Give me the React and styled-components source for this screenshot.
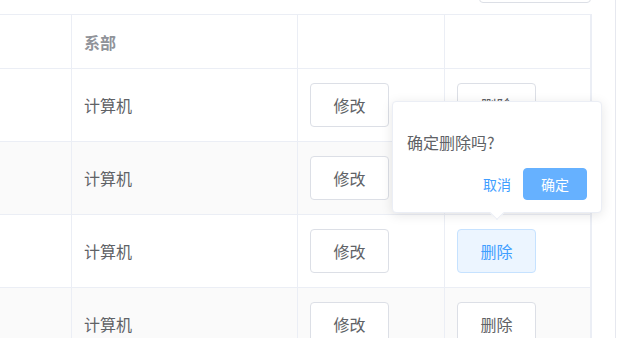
import React from "react";
import styled, { createGlobalStyle } from "styled-components";

const GlobalStyle = createGlobalStyle`
  html, body { margin: 0; padding: 0; background: #fff; }
  body { font-family: "Noto Sans CJK SC", "Noto Sans", sans-serif; }
  * { box-sizing: border-box; }
`;

const Page = styled.div`
  position: relative;
  width: 616px;
  height: 338px;
  overflow: hidden;
  border-right: 1px solid #e6e8ef;
  background: #fff;
`;

const Toolbar = styled.div`
  height: 3px;
  overflow: hidden;
  display: flex;
  justify-content: flex-end;
  align-items: flex-end;
  padding-right: 24px;
  margin-bottom: 11px;
`;

const ToolButton = styled.button`
  width: 112px;
  height: 36px;
  border: 1px solid #dcdfe6;
  border-radius: 4px;
  background: #fff;
`;

const Table = styled.div`
  width: 592px;
  border-top: 1px solid #ebeef5;
`;

const Row = styled.div`
  display: grid;
  grid-template-columns: 72px 226px 147px 147px;
  height: ${(p) => (p.$header ? "54px" : "73px")};
  background: ${(p) => (p.$striped ? "#fafafa" : "#fff")};
`;

const Cell = styled.div`
  display: flex;
  align-items: center;
  padding: 0 12px;
  border-right: 1px solid #ebeef5;
  border-bottom: 1px solid #ebeef5;
  font-size: 16px;
  color: ${(p) => (p.$header ? "#909399" : "#606266")};
  font-weight: ${(p) => (p.$header ? 700 : 400)};
  &:last-child { border-right-width: 2px; }
`;

const Button = styled.button`
  width: 79px;
  height: 44px;
  border-radius: 4px;
  font-family: inherit;
  font-size: 16px;
  padding: 0;
  cursor: pointer;
  border: 1px solid ${(p) => (p.$active ? "#c6e2ff" : "#dcdfe6")};
  background: ${(p) => (p.$active ? "#ecf5ff" : "#fff")};
  color: ${(p) => (p.$active ? "#409eff" : "#606266")};
`;

const Popover = styled.div`
  position: absolute;
  left: 392px;
  top: 101px;
  width: 210px;
  height: 112px;
  padding: 29px 14px 13px;
  background: #fff;
  border: 1px solid #ebeef5;
  border-radius: 4px;
  box-shadow: 0 2px 12px 0 rgba(0, 0, 0, 0.1);
  z-index: 10;
`;

const Arrow = styled.span`
  position: absolute;
  left: 99px;
  bottom: -6px;
  width: 10px;
  height: 10px;
  background: #fff;
  border-right: 1px solid #ebeef5;
  border-bottom: 1px solid #ebeef5;
  transform: rotate(45deg);
`;

const Message = styled.p`
  margin: 0;
  font-size: 16px;
  line-height: 22px;
  color: #606266;
`;

const Actions = styled.div`
  display: flex;
  justify-content: flex-end;
  align-items: center;
  gap: 12px;
  margin-top: 15px;
`;

const TextButton = styled.button`
  border: none;
  background: none;
  padding: 0;
  font-family: inherit;
  font-size: 14px;
  color: #409eff;
`;

const PrimaryButton = styled.button`
  width: 64px;
  height: 32px;
  border: 1px solid #66b1ff;
  border-radius: 4px;
  background: #66b1ff;
  color: #fff;
  font-family: inherit;
  font-size: 14px;
  padding: 0;
`;

const rows = [0, 1, 2, 3];

export default function App() {
  return (
    <Page>
      <GlobalStyle />
      <Toolbar>
        <ToolButton />
      </Toolbar>
      <Table>
        <Row $header>
          <Cell $header />
          <Cell $header>系部</Cell>
          <Cell $header />
          <Cell $header />
        </Row>
        {rows.map((i) => (
          <Row key={i} $striped={i % 2 === 1}>
            <Cell />
            <Cell>计算机</Cell>
            <Cell>
              <Button>修改</Button>
            </Cell>
            <Cell>
              <Button $active={i === 2}>删除</Button>
            </Cell>
          </Row>
        ))}
      </Table>
      <Popover>
        <Message>确定删除吗?</Message>
        <Actions>
          <TextButton>取消</TextButton>
          <PrimaryButton>确定</PrimaryButton>
        </Actions>
        <Arrow />
      </Popover>
    </Page>
  );
}
